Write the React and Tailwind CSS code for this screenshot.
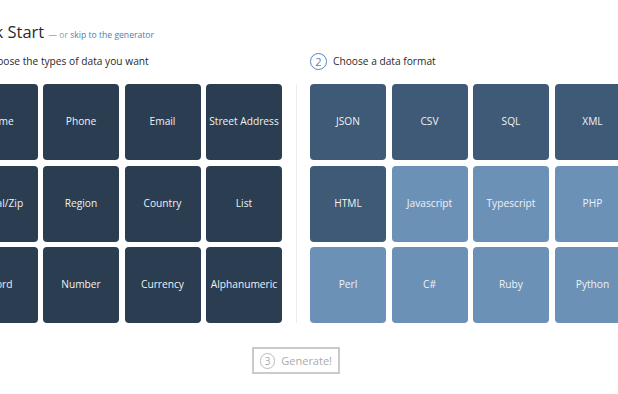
import React from "react";

const dataTypes = [
  "Name", "Phone", "Email", "Street Address",
  "Postal/Zip", "Region", "Country", "List",
  "Word", "Number", "Currency", "Alphanumeric",
];

const formats = [
  { label: "JSON", light: false },
  { label: "CSV", light: false },
  { label: "SQL", light: false },
  { label: "XML", light: false },
  { label: "HTML", light: false },
  { label: "Javascript", light: true },
  { label: "Typescript", light: true },
  { label: "PHP", light: true },
  { label: "Perl", light: true },
  { label: "C#", light: true },
  { label: "Ruby", light: true },
  { label: "Python", light: true },
];

function Step({ n, label }) {
  return (
    <div className="flex h-[17px] items-center gap-[6px]">
      <span className="flex h-[17px] w-[17px] items-center justify-center rounded-full border border-[#5b82b8] text-[11px] leading-none text-[#5b82b8]">
        {n}
      </span>
      <span className="text-[10.2px] leading-[17px] text-[#2a2a2a]">{label}</span>
    </div>
  );
}

function Tile({ label, className }) {
  return (
    <div
      className={
        "flex h-[76px] w-[76px] items-center justify-center rounded-[4px] text-[10.2px] text-[#eef2f6] " +
        className
      }
    >
      {label}
    </div>
  );
}

export default function App() {
  return (
    <div className="h-[394px] w-[618px] overflow-hidden bg-white font-['Open_Sans',sans-serif]">
      <div className="ml-[-38.5px] w-[669px] pt-[20.5px]">
        <h1 className="ml-[-2px] whitespace-nowrap text-[16.5px] font-normal leading-[22px] text-[#2a2a2a]">
          Quick Start{" "}
          <span className="text-[8.6px] text-[#999]">
            — or <a className="text-[#4f7bb5]">skip to the generator</a>
          </span>
        </h1>

        <div className="mt-[7.5px] flex">
          <div className="w-[320.5px]">
            <Step n="1" label="Choose the types of data you want" />
          </div>
          <div className="ml-[28px] w-[320.5px]">
            <Step n="2" label="Choose a data format" />
          </div>
        </div>

        <div className="mt-[14px] flex">
          <div className="grid w-[320.5px] grid-cols-4 gap-[5.5px]">
            {dataTypes.map((t) => (
              <Tile key={t} label={t} className="bg-[#2b3d50]" />
            ))}
          </div>
          <div className="ml-[14px] mr-[13px] w-px bg-[#ececec]" />
          <div className="grid w-[320.5px] grid-cols-4 gap-[5.5px]">
            {formats.map((f) => (
              <Tile
                key={f.label}
                label={f.label}
                className={f.light ? "bg-[#6c91b7]" : "bg-[#3e5a77]"}
              />
            ))}
          </div>
        </div>

        <div className="mt-[24px] flex justify-center">
          <div className="flex h-[27px] w-[88px] items-center gap-[6px] border-2 border-[#cacaca] px-[6px]">
            <span className="flex h-[16px] w-[16px] items-center justify-center rounded-full border border-[#bbb] text-[10px] leading-none text-[#aaa]">
              3
            </span>
            <span className="text-[11px] leading-none text-[#aaa]">Generate!</span>
          </div>
        </div>
      </div>
    </div>
  );
}
